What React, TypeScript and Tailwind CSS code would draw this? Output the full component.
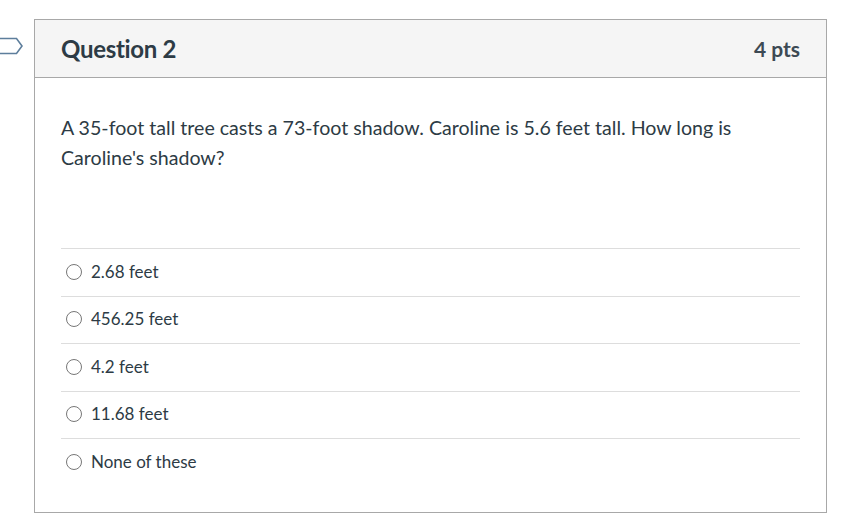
import React from 'react';

const answers = ['2.68 feet', '456.25 feet', '4.2 feet', '11.68 feet', 'None of these'];

export default function App() {
  return (
    <div className="min-h-[531px] w-[852px] bg-white pt-[19px] font-['Lato',sans-serif] text-[#2d3b45]">
      <div className="relative ml-[34px] w-[793px] border border-[#a8a8a8]">
        {/* bookmark marker */}
        <svg className="absolute left-[-35px] top-[17px]" width="24" height="18" viewBox="0 0 24 18">
          <path d="M-2 1.5 H16.5 L22 9 L16.5 16.5 H-2" fill="none" stroke="#5d7e9c" strokeWidth="1.6" />
        </svg>
        <div className="flex h-[58px] items-center justify-between border-b border-[#a8a8a8] bg-[#f5f5f5] px-[26px]">
          <h2 className="text-[24px] font-bold tracking-[-0.3px]">Question 2</h2>
          <span className="text-[21px] font-bold text-[#3d4a54]">4 pts</span>
        </div>
        <div className="px-[26px] pt-[35px] pb-[26px]">
          <p className="text-[19.6px] leading-[30px]">
            A 35-foot tall tree casts a 73-foot shadow. Caroline is 5.6 feet tall. How long is Caroline's shadow?
          </p>
          <div className="mt-[75px]">
            {answers.map((a) => (
              <label key={a} className="flex h-[47.5px] items-center gap-[9px] border-t border-[#dddddd] pl-[5px] text-[17px]">
                <span className="mb-[1px] h-[16px] w-[16px] rounded-full border border-[#777]" />
                <span className="-translate-y-[1px]">{a}</span>
              </label>
            ))}
          </div>
        </div>
      </div>
    </div>
  );
}
